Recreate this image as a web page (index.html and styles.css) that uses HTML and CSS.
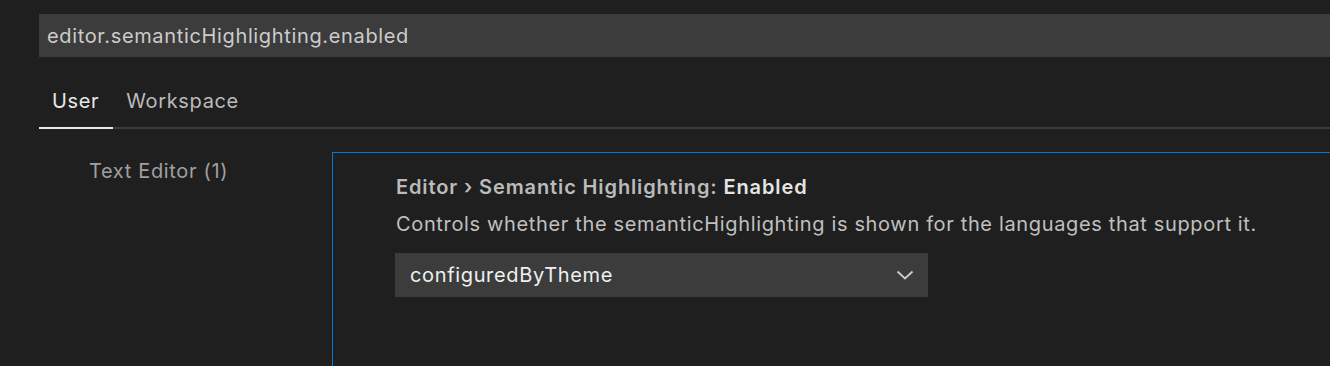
FILE: index.html
```html
<!DOCTYPE html>
<html lang="en">
<head>
    <meta charset="UTF-8">
    <title>Settings</title>
    <link rel="stylesheet" href="styles.css">
</head>
<body>
    <div class="search">editor.semanticHighlighting.enabled</div>

    <div class="tabs">
        <div class="tab active">User</div>
        <div class="tab">Workspace</div>
    </div>

    <div class="body">
        <div class="toc">
            <div class="toc-item">Text Editor (1)</div>
        </div>

        <div class="setting">
            <div class="title">Editor › Semantic Highlighting: <span class="key">Enabled</span></div>
            <div class="desc">Controls whether the semanticHighlighting is shown for the languages that support it.</div>
            <div class="select">
                <span>configuredByTheme</span>
                <svg class="chevron" width="18" height="10" viewBox="0 0 18 10">
                    <path d="M1.5 1.5 L9 8.5 L16.5 1.5" fill="none" stroke="#cccccc" stroke-width="1.8"/>
                </svg>
            </div>
        </div>
    </div>
</body>
</html>
```

FILE: styles.css
```css
* {
    margin: 0;
    padding: 0;
    box-sizing: border-box;
}

body {
    background-color: #1f1f1f;
    font-family: 'Inter', 'Liberation Sans', sans-serif;
    font-size: 20px;
    letter-spacing: 0.65px;
    color: #cccccc;
    overflow: hidden;
    height: 366px;
}

.search {
    margin: 14px 0 0 39px;
    height: 43px;
    background-color: #3c3c3c;
    padding-left: 8px;
    display: flex;
    align-items: center;
    color: #cccccc;
}

.tabs {
    display: flex;
    margin: 28px 0 0 39px;
    height: 44px;
    border-bottom: 2px solid #3c3c3c;
}

.tab {
    padding: 0 13px 10px;
    height: 42px;
    display: flex;
    align-items: center;
    color: #bbbbbb;
}

.tab.active {
    color: #e8e8e8;
    border-bottom: 2px solid #e8e8e8;
    margin-bottom: -2px;
    height: 44px;
    padding-right: 14px;
}

.body {
    display: flex;
    padding-top: 23px;
}

.toc {
    width: 332px;
    padding: 7px 0 0 89px;
}

.toc-item {
    color: #a0a0a0;
}

.setting {
    flex: 1;
    height: 214px;
    border: 1px solid #0078d4;
    border-right: none;
    border-bottom: none;
    padding: 22px 0 0 63px;
}

.title {
    font-weight: 600;
    letter-spacing: 0.88px;
    color: #bbbbbb;
}

.title .key {
    color: #e4e4e4;
}

.desc {
    margin-top: 13px;
    color: #c0c0c0;
}

.select {
    margin: 17px 0 0 -1px;
    width: 533px;
    height: 44px;
    background-color: #3c3c3c;
    display: flex;
    align-items: center;
    justify-content: space-between;
    padding: 0 14px 0 15px;
    color: #f0f0f0;
}
```
